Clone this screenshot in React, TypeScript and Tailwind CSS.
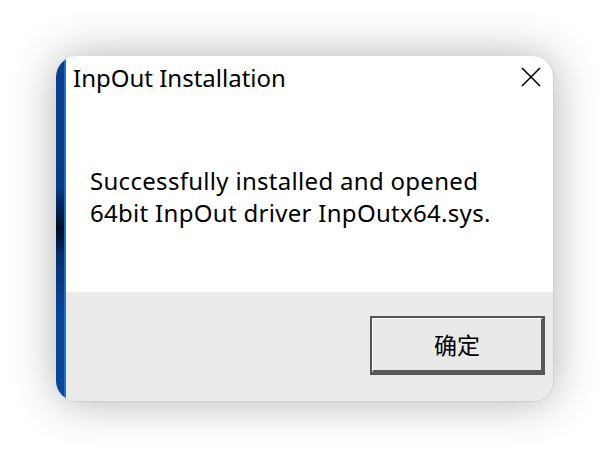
export default function App() {
  return (
    <div className="w-[610px] h-[458px] bg-white pt-[56px] pl-[56px] font-['Noto_Sans','Noto_Sans_CJK_SC',sans-serif] text-black">
      <div className="w-[498px] h-[346px] rounded-[21px] overflow-hidden flex bg-white shadow-[0_0_45px_rgba(0,0,0,0.3)] border-r border-b border-[#cfcfcf]">
        {/* blue accent strip on the left */}
        <div className="flex shrink-0">
          <div className="w-[8px] bg-[linear-gradient(to_bottom,#0b3f8c_0%,#093a82_38%,#020d26_50%,#072f6c_58%,#0b4596_75%,#0b4596_100%)]" />
          <div className="w-[2px] bg-[#1b6fd4]" />
        </div>

        <div className="flex-1 flex flex-col">
          <div className="flex-1 flex flex-col">
            <div className="flex items-center justify-between pt-[6px] pl-[7px] pr-[12px]">
              <span className="text-[24px] leading-[32px]">InpOut Installation</span>
              <svg width="20" height="20" viewBox="0 0 20 20" className="mt-[-2px]">
                <path d="M1 1 L19 19 M19 1 L1 19" stroke="#000" strokeWidth="1.6" />
              </svg>
            </div>
            <div className="pl-[24px] mt-[71px] text-[24px] leading-[32px] tracking-[0.3px]">
              <div>Successfully installed and opened</div>
              <div>64bit InpOut driver InpOutx64.sys.</div>
            </div>
          </div>

          <div className="h-[109px] bg-[#ebebeb] flex justify-end items-start pt-[24px] pr-[8px]">
            <button className="w-[175px] h-[59px] border-2 border-[#555555] bg-[#e9e9e9] p-0">
              <div className="w-full h-full flex items-center justify-center border-t border-l border-white border-b-[3px] border-r-2 border-b-[#5a5a5a] border-r-[#5a5a5a] text-[23px] font-['Noto_Sans_CJK_SC',sans-serif]">
                确定
              </div>
            </button>
          </div>
        </div>
      </div>
    </div>
  )
}
